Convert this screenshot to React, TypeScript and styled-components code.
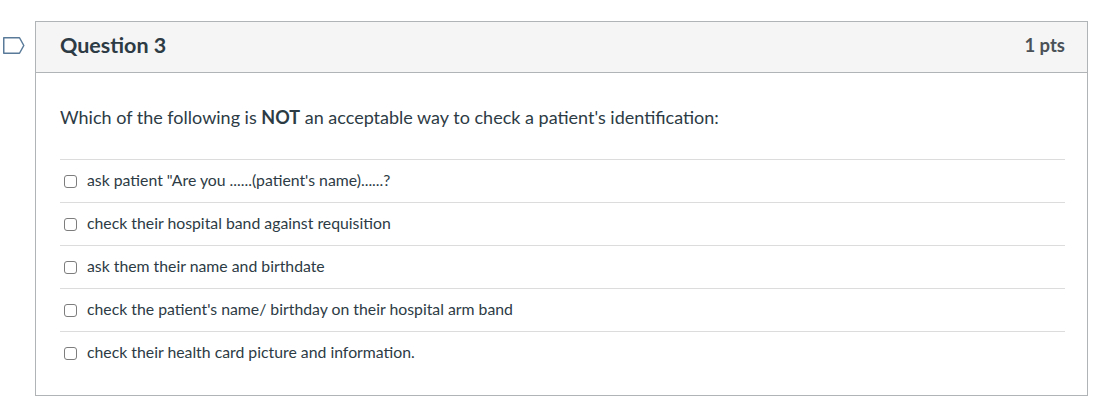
import React from "react";
import styled, { createGlobalStyle } from "styled-components";

const GlobalStyle = createGlobalStyle`
  html, body {
    margin: 0;
    padding: 0;
    background: #ffffff;
  }
  body {
    font-family: "Lato", "Helvetica Neue", Arial, sans-serif;
    color: #2d3b45;
  }
`;

// Page row: flag column + question card
const Page = styled.div`
  display: flex;
  align-items: flex-start;
  padding: 21px 17px 0 0;
`;

const FlagColumn = styled.div`
  width: 35px;
  flex: none;
  display: flex;
  padding: 15px 0 0 2px;
  box-sizing: border-box;
`;

const Card = styled.section`
  flex: 1;
  border: 1px solid #b1b4b6;
  background: #ffffff;
`;

const Header = styled.header`
  height: 51px;
  box-sizing: border-box;
  display: flex;
  align-items: center;
  justify-content: space-between;
  padding: 0 22px 5px 24px;
  background: #f5f5f5;
  border-bottom: 1px solid #b1b4b6;
`;

const Title = styled.h2`
  margin: 0;
  font-size: 21.5px;
  font-weight: 700;
  color: #2d3b45;
`;

const Points = styled.div`
  font-size: 18.5px;
  font-weight: 700;
  color: #4a5157;
`;

const Body = styled.div`
  padding: 33px 22px 21px 24px;
`;

const QuestionText = styled.p`
  margin: 0 0 31px;
  font-size: 18px;
  line-height: 22px;
  color: #2d3b45;
`;

const AnswerList = styled.ul`
  list-style: none;
  margin: 0;
  padding: 0;
`;

const AnswerRow = styled.li`
  display: flex;
  align-items: center;
  height: 42px;
  border-top: 1px solid #dcdcdc;
  padding-left: 4px;
  font-size: 15.8px;
  color: #2d3b45;
`;

const AnswerLabel = styled.span`
  padding-bottom: 4px;
`;

const Box = styled.span`
  width: 13px;
  height: 13px;
  box-sizing: border-box;
  border: 1px solid #7d7d7d;
  border-radius: 3px;
  background: #ffffff;
  margin-right: 10px;
  flex: none;
`;

const FlagIcon = () => (
  <svg width="24" height="20" viewBox="0 0 24 20">
    <path
      d="M1.75 1.75 H17.5 L21.8 9.5 L17.5 17.25 H1.75 Z"
      fill="none"
      stroke="#5a7a99"
      strokeWidth="1.5"
      strokeLinejoin="round"
    />
  </svg>
);

const answers = [
  `ask patient "Are you ......(patient's name)......?`,
  "check their hospital band against requisition",
  "ask them their name and birthdate",
  "check the patient's name/ birthday on their hospital arm band",
  "check their health card picture and information.",
];

const App: React.FC = () => {
  return (
    <>
      <GlobalStyle />
      <Page>
        <FlagColumn>
          <FlagIcon />
        </FlagColumn>
        <Card>
          <Header>
            <Title>Question 3</Title>
            <Points>1 pts</Points>
          </Header>
          <Body>
            <QuestionText>
              Which of the following is <strong>NOT</strong> an acceptable way to
              check a patient's identification:
            </QuestionText>
            <AnswerList>
              {answers.map((a) => (
                <AnswerRow key={a}>
                  <Box />
                  <AnswerLabel>{a}</AnswerLabel>
                </AnswerRow>
              ))}
            </AnswerList>
          </Body>
        </Card>
      </Page>
    </>
  );
};

export default App;
